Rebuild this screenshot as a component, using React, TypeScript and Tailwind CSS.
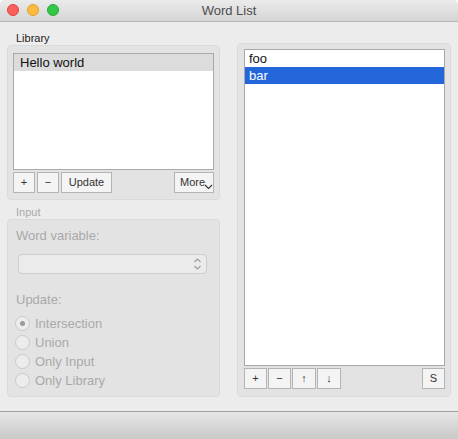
import React from "react";

function Btn({ children, w, className = "" }: { children: React.ReactNode; w: string; className?: string }) {
  return (
    <div
      className={`${w} h-[21px] flex items-center justify-center border border-[#b4b4b4] bg-[#f4f4f4] text-[11px] text-[#333] leading-none ${className}`}
    >
      {children}
    </div>
  );
}

function Radio({ label, checked }: { label: string; checked?: boolean }) {
  return (
    <div className="flex items-center h-[19px]">
      <div className="w-[15px] h-[15px] rounded-full border border-[#c9c9c9] bg-[#ececec] flex items-center justify-center ml-[7px]">
        {checked && <div className="w-[5px] h-[5px] rounded-full bg-[#9a9a9a]" />}
      </div>
      <span className="ml-[5px] text-[13px] text-[#a9a9a9]">{label}</span>
    </div>
  );
}

export default function App() {
  return (
    <div className="w-[458px] h-[439px] flex flex-col bg-[#ececec] font-['Liberation_Sans',Arial,sans-serif] overflow-hidden rounded-t-[5px]">
      {/* title bar */}
      <div className="relative h-[22px] shrink-0 border-b border-[#b7b7b7] bg-gradient-to-b from-[#ebebeb] to-[#d5d5d5] flex items-center justify-center">
        <div className="absolute left-[7px] top-[4px] flex gap-[8px]">
          <div className="w-[12px] h-[12px] rounded-full bg-[#fc605c] border border-[#e0443e]" />
          <div className="w-[12px] h-[12px] rounded-full bg-[#fdbc40] border border-[#dea123]" />
          <div className="w-[12px] h-[12px] rounded-full bg-[#34c84a] border border-[#27aa35]" />
        </div>
        <span className="text-[13px] text-[#4d4d4d]">Word List</span>
      </div>

      {/* main */}
      <div className="flex-1 flex pl-[7px] pr-[7px] gap-[17px] pb-[14px]">
        {/* left column */}
        <div className="w-[213px] flex flex-col">
          <div className="h-[23px] pt-[10px] pl-[9px] text-[11px] leading-[13px] text-[#222]">Library</div>
          <div className="h-[155px] rounded-[4px] border border-[#dadada] bg-[#e3e3e3] pt-[7px] px-[5px] pb-[6px] flex flex-col">
            <div className="h-[117px] border border-[#a9a9a9] bg-white">
              <div className="h-[17px] bg-[#dcdcdc] pl-[6px] text-[13px] leading-[17px] text-[#111]">Hello world</div>
            </div>
            <div className="mt-[2px] flex gap-[2px]">
              <Btn w="w-[22px]">+</Btn>
              <Btn w="w-[22px]">−</Btn>
              <Btn w="w-[51px]">Update</Btn>
              <div className="flex-1" />
              <div className="relative">
                <Btn w="w-[40px]">
                  <span className="pr-[3px]">More</span>
                </Btn>
                <svg className="absolute right-[1px] bottom-[3px]" width="9" height="6" viewBox="0 0 9 6">
                  <path d="M1 1 L4.5 4.5 L8 1" fill="none" stroke="#333" strokeWidth="1.1" />
                </svg>
              </div>
            </div>
          </div>
          <div className="h-[19px] pt-[6px] pl-[9px] text-[11px] leading-[13px] text-[#a9a9a9]">Input</div>
          <div className="flex-1 rounded-[4px] border border-[#dadada] bg-[#e3e3e3] flex flex-col">
            <div className="pt-[8px] pl-[8px] text-[13px] leading-[16px] text-[#a9a9a9]">Word variable:</div>
            <div className="mt-[10px] ml-[10px] w-[189px] h-[20px] rounded-[4px] border border-[#cfcfcf] bg-[#ebebeb] flex items-center justify-end pr-[4px]">
              <svg width="9" height="14" viewBox="0 0 9 14">
                <path d="M1.5 5 L4.5 2 L7.5 5" fill="none" stroke="#9a9a9a" strokeWidth="1.1" />
                <path d="M1.5 9 L4.5 12 L7.5 9" fill="none" stroke="#9a9a9a" strokeWidth="1.1" />
              </svg>
            </div>
            <div className="mt-[18px] pl-[8px] text-[13px] leading-[16px] text-[#a9a9a9]">Update:</div>
            <div className="mt-[6px] flex flex-col">
              <Radio label="Intersection" checked />
              <Radio label="Union" />
              <Radio label="Only Input" />
              <Radio label="Only Library" />
            </div>
          </div>
        </div>

        {/* right column */}
        <div className="w-[214px] mt-[21px] rounded-[4px] border border-[#dadada] bg-[#e3e3e3] pt-[5px] pl-[6px] pr-[5px] pb-[7px] flex flex-col">
          <div className="flex-1 border border-[#a9a9a9] bg-white">
            <div className="h-[17px] pl-[4px] text-[13px] leading-[17px] text-[#111]">foo</div>
            <div className="h-[17px] pl-[4px] bg-[#2366d9] text-[13px] leading-[17px] text-white">bar</div>
          </div>
          <div className="mt-[2px] flex gap-[1px]">
            <Btn w="w-[23px]">+</Btn>
            <Btn w="w-[23px]">−</Btn>
            <Btn w="w-[24px]">↑</Btn>
            <Btn w="w-[24px]">↓</Btn>
            <div className="flex-1" />
            <Btn w="w-[23px]">S</Btn>
          </div>
        </div>
      </div>

      {/* bottom bar */}
      <div className="h-[28px] shrink-0 border-t border-[#a0a0a0] bg-gradient-to-b from-[#e6e6e6] to-[#c9c9c9]" />
    </div>
  );
}
